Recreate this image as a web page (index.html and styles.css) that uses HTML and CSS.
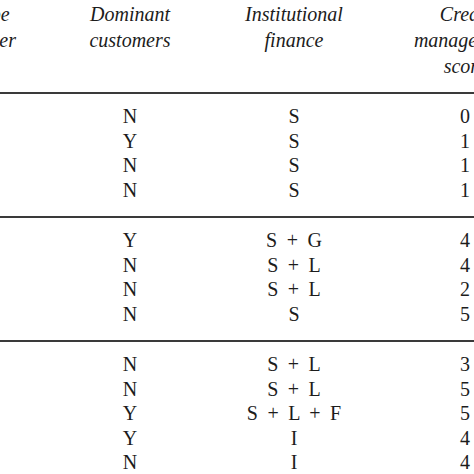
FILE: index.html
```html
<!DOCTYPE html>
<html lang="en">
<head>
<meta charset="utf-8">
<title>Table</title>
<link rel="stylesheet" href="styles.css">
</head>
<body>
<div class="table">
  <div class="row head">
    <div class="cell">Type<br>owner</div>
    <div class="cell">Dominant<br>customers</div>
    <div class="cell">Institutional<br>finance</div>
    <div class="cell">Credit<br>management<br>score</div>
  </div>
  <div class="group">
    <div class="row"><div class="cell"></div><div class="cell">N</div><div class="cell">S</div><div class="cell">0</div></div>
    <div class="row"><div class="cell"></div><div class="cell">Y</div><div class="cell">S</div><div class="cell">1</div></div>
    <div class="row"><div class="cell"></div><div class="cell">N</div><div class="cell">S</div><div class="cell">1</div></div>
    <div class="row"><div class="cell"></div><div class="cell">N</div><div class="cell">S</div><div class="cell">1</div></div>
  </div>
  <div class="group">
    <div class="row"><div class="cell"></div><div class="cell">Y</div><div class="cell">S + G</div><div class="cell">4</div></div>
    <div class="row"><div class="cell"></div><div class="cell">N</div><div class="cell">S + L</div><div class="cell">4</div></div>
    <div class="row"><div class="cell"></div><div class="cell">N</div><div class="cell">S + L</div><div class="cell">2</div></div>
    <div class="row"><div class="cell"></div><div class="cell">N</div><div class="cell">S</div><div class="cell">5</div></div>
  </div>
  <div class="group last">
    <div class="row"><div class="cell"></div><div class="cell">N</div><div class="cell">S + L</div><div class="cell">3</div></div>
    <div class="row"><div class="cell"></div><div class="cell">N</div><div class="cell">S + L</div><div class="cell">5</div></div>
    <div class="row"><div class="cell"></div><div class="cell">Y</div><div class="cell">S + L + F</div><div class="cell">5</div></div>
    <div class="row"><div class="cell"></div><div class="cell">Y</div><div class="cell">I</div><div class="cell">4</div></div>
    <div class="row"><div class="cell"></div><div class="cell">N</div><div class="cell">I</div><div class="cell">4</div></div>
  </div>
</div>
</body>
</html>
```
FILE: styles.css
```css
html, body {
  margin: 0;
  padding: 0;
  background: #ffffff;
  overflow: hidden;
  width: 474px;
  height: 474px;
}

.table {
  width: 620px;
  margin-left: -70px;
  font-family: "Liberation Serif", "Times New Roman", serif;
  font-size: 20px;
  color: #1c1c1c;
}

.row {
  display: grid;
  grid-template-columns: 122px 156px 172px 170px;
  line-height: 24.5px;
}

.cell {
  text-align: center;
  word-spacing: 4.5px;
  white-space: nowrap;
}

.head {
  font-style: italic;
  line-height: 26.3px;
  padding-top: 0.5px;
  padding-bottom: 12px;
  border-bottom: 2px solid #3a3a3a;
  height: 79px;
}

.group {
  padding-top: 10.5px;
  padding-bottom: 13.5px;
  border-bottom: 2px solid #3a3a3a;
}

.group.last {
  border-bottom: none;
}
```
